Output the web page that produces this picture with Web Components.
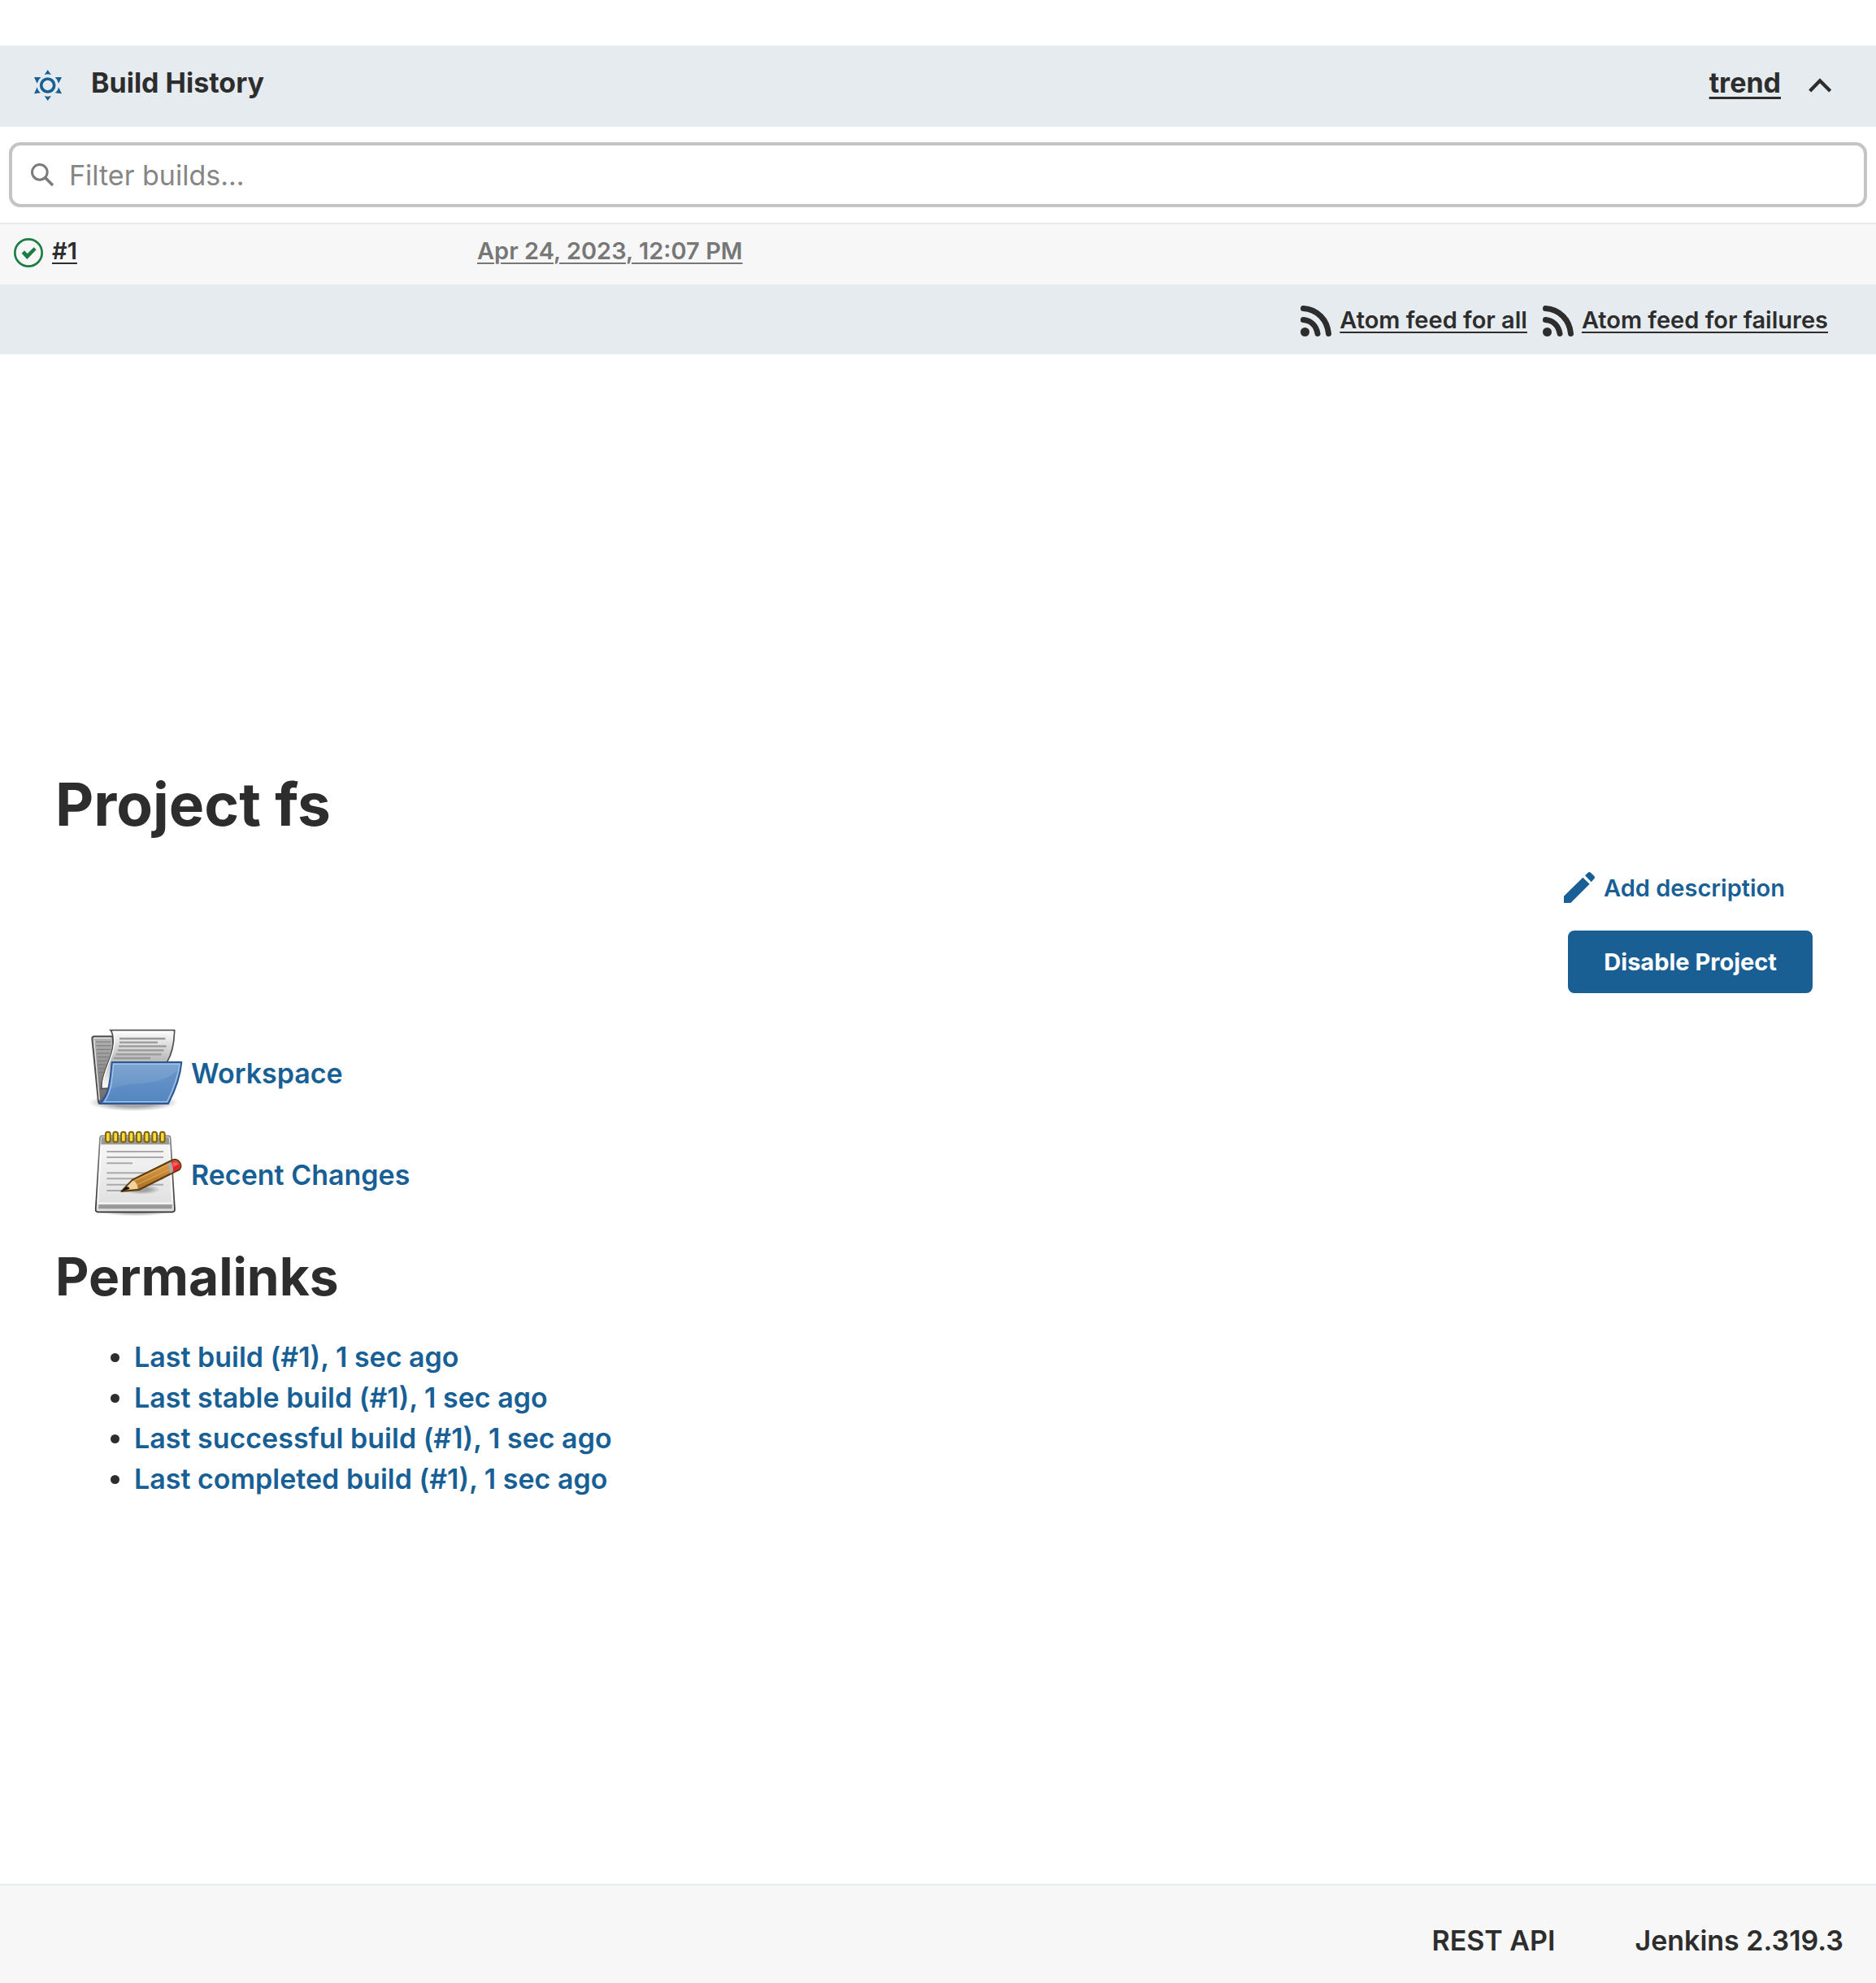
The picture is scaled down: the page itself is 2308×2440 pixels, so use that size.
<!DOCTYPE html>
<html lang="en">
<head>
<meta charset="utf-8">
<title>fs [Jenkins]</title>
<style>
  body {
    margin: 0;
    background-color: #fff;
    color: #2d2d2d;
    font-family: Inter, "Liberation Sans", sans-serif;
    font-size: 34px;
  }
</style>
</head>
<body>
<jenkins-page>
  <build-history slot="side" heading="Build History">
    <build-row number="#1" date="Apr 24, 2023, 12:07 PM"></build-row>
    <feed-link slot="feeds">Atom feed for all</feed-link>
    <feed-link slot="feeds">Atom feed for failures</feed-link>
  </build-history>
  <project-panel heading="Project fs">
    <project-link icon="folder">Workspace</project-link>
    <project-link icon="notepad">Recent Changes</project-link>
  </project-panel>
  <perma-links heading="Permalinks"></perma-links>
  <page-footer slot="footer"></page-footer>
</jenkins-page>

<script>
const icons = {
  weather: `
    <svg width="38" height="38" viewBox="120 138 114 114" fill="#185f95" aria-hidden="true">
      <circle cx="176" cy="195" r="24" fill="none" stroke="#185f95" stroke-width="11"/>
      <path d="M176 138l13 18q-13-4-25 0zM176 252l13-18q-13 4-25 0zM126 165h25q-10 9-14 23zM228 165h-25q10 9 13 23zM126 226l11-24q4 15 13 21zM228 226l-12-24q-3 15-13 21z"/>
    </svg>`,
  search: `
    <svg width="28" height="28" viewBox="112 482 84 84" fill="none" stroke="#7b7b7b" aria-hidden="true">
      <circle cx="144.500" cy="514.500" r="28" stroke-width="9"/>
      <path d="M166 536l27 27" stroke-width="11"/>
    </svg>`,
  chevron: `
    <svg width="28" height="18" viewBox="494 169 84 54" fill="none" stroke="#2d2d2d" stroke-width="13" aria-hidden="true">
      <path d="M499 217l37-38 38 38"/>
    </svg>`,
  success: `
    <svg width="36" height="36" viewBox="51 99 108 108" fill="#1b7d43" role="img" aria-label="Success">
      <circle cx="105" cy="153" r="50" fill="none" stroke="#1b7d43" stroke-width="8"/>
      <path d="M80 155l10-10 11 11 24-23 9 9-34 35z"/>
    </svg>`,
  feed: `
    <svg width="38" height="38" viewBox="0 0 38 38" fill="none" stroke="#2d2d2d" stroke-width="7" stroke-linecap="round" aria-hidden="true">
      <circle cx="5.500" cy="32.500" r="5.500" fill="#2d2d2d" stroke="none"/>
      <path d="M3.500 17.500c10 1 16 8 17.500 17M3.500 3.500c17 1 29.500 14 31 31"/>
    </svg>`,
  pencil: `
    <svg width="38" height="38" viewBox="72 69 114 114" fill="#185f95" aria-hidden="true">
      <path d="M72 158l70-69 25 24-70 70H72zM150 82l11-11q5-4 10 0l13 13q4 5 0 10l-11 12z"/>
    </svg>`,
  folder: `
    <svg width="112" height="112" viewBox="36 42 336 336" overflow="visible" aria-hidden="true">
      <defs>
        <radialGradient id="shade"><stop offset=".5" stop-color="#000" stop-opacity=".35"/><stop offset="1" stop-color="#000" stop-opacity="0"/></radialGradient>
        <linearGradient id="paper" x2="0" y2="1"><stop stop-color="#fff"/><stop offset=".5" stop-color="#bbb"/><stop offset="1" stop-color="#fff"/></linearGradient>
        <linearGradient id="blue" x2="0" y2="1"><stop stop-color="#7ea6d1"/><stop offset="1" stop-color="#5b8ac4"/></linearGradient>
        <linearGradient id="back" x2="0" y2="1"><stop stop-color="#b5b5b5"/><stop offset="1" stop-color="#666"/></linearGradient>
      </defs>
      <ellipse cx="192" cy="320" rx="166" ry="32" fill="url(#shade)"/>
      <path d="M40 84q0-8 8-8h68l20 150-66 98q-6 0-7-7z" fill="url(#back)" stroke="#505050" stroke-width="6"/>
      <path d="M46 86q0-4 4-4h60M47 90l20 220" fill="none" stroke="#e6e6e6" stroke-width="4"/>
      <path d="M54 96h55M55 110h55M56 124h52M57 138h48M59 152h43M60 166h37M61 180h32M63 194h26M64 208h21" stroke="#777" stroke-width="3"/>
      <path d="M108 53h236q-1 72-27 117L270 260l-196 9c2-72 49-119 43-184q-1-23-9-32z" fill="url(#paper)" stroke="#4d4d4d" stroke-width="5"/>
      <path d="M118 58h220M122 66c8 80-40 126-43 190" fill="none" stroke="#fff" stroke-width="4"/>
      <path d="M141 84h169M141 98h141M138 112h176M134 127h171M128 142h168M120 156h135" stroke="#999" stroke-width="7"/>
      <path d="M113 171h257q-6 71-49 153H68c34-30 37-73 45-153z" fill="url(#blue)" stroke="#2c5797" stroke-width="6" stroke-linejoin="round"/>
      <path d="M102 274c74-40 184 0 258-78q-9 56-42 119H84q12-18 18-41z" fill="#4e80bd" opacity=".4"/>
      <path d="M119 178h244q-9 63-46 139H85c24-34 28-69 34-139z" fill="none" stroke="#a5c3e4" stroke-width="4"/>
    </svg>`,
  notepad: `
    <svg width="112" height="112" viewBox="36 42 336 336" overflow="visible" aria-hidden="true">
      <defs>
        <radialGradient id="shade"><stop offset=".4" stop-color="#000" stop-opacity=".3"/><stop offset="1" stop-color="#000" stop-opacity="0"/></radialGradient>
        <linearGradient id="page" x2="0" y2="1"><stop stop-color="#f9f9f9"/><stop offset="1" stop-color="#dedede"/></linearGradient>
        <linearGradient id="edge" x2="0" y2="1"><stop stop-color="#888"/><stop offset="1" stop-color="#333"/></linearGradient>
        <linearGradient id="wood" x2=".4" y2="1"><stop stop-color="#e5b565"/><stop offset=".5" stop-color="#d0923e"/><stop offset="1" stop-color="#a0661f"/></linearGradient>
      </defs>
      <ellipse cx="200" cy="348" rx="135" ry="16" fill="url(#shade)"/>
      <path d="M77 68h244q7 0 8 8l16 264q0 9-9 9H61q-8 0-8-9L69 76q1-8 8-8z" fill="url(#page)" stroke="url(#edge)" stroke-width="5"/>
      <path d="M74 73h249l3 27H73z" fill="#999"/>
      <path d="M65 322h270v15H63z" fill="#999"/>
      <path d="M60 316h277M74 102L61 312M324 102l12 210" stroke="#fff" stroke-width="4" fill="none"/>
      <path d="M94 126h209M94 147h209M94 169h95M94 205h209M94 226h209M94 248h209M94 270h90" stroke="#aaa" stroke-width="6"/>
      <g fill="#f5da42" stroke="#80640c" stroke-width="6">
        <rect x="90" y="53" width="17" height="38" rx="8"/><rect x="118" y="53" width="17" height="38" rx="8"/>
        <rect x="147" y="53" width="17" height="38" rx="8"/><rect x="176" y="53" width="17" height="38" rx="8"/>
        <rect x="204" y="53" width="17" height="38" rx="8"/><rect x="233" y="53" width="17" height="38" rx="8"/>
        <rect x="262" y="53" width="17" height="38" rx="8"/><rect x="291" y="53" width="17" height="38" rx="8"/>
      </g>
      <ellipse cx="222" cy="266" rx="70" ry="18" fill="url(#shade)"/>
      <path d="M148 273l41-43 144-71c24-13 45 18 29 33L213 267z" fill="url(#wood)" stroke="#5c3b10" stroke-width="6" stroke-linejoin="round"/>
      <path d="M156 268l34-35c9 0 20 16 18 30z" fill="#efd49d"/>
      <path d="M149 272l16-16q11-1 14 7z" fill="#111"/>
      <path d="M192 236l132-64M204 249l128-60" stroke="#e0ac5c" stroke-width="3"/>
      <path d="M318 171l13-7q11 12 8 37l-13 6q4-17-8-36z" fill="#aaa"/>
      <path d="M331 164c21-13 43 10 29 25q-7 7-22 12 3-20-7-37z" fill="#e8202c"/>
      <path d="M335 168q17-9 25 4l-18 10z" fill="#ff5a5a"/>
    </svg>`
};

class JenkinsPage extends HTMLElement {
  constructor() {
    super();
    this.attachShadow({mode: 'open'}).innerHTML = `
      <style>
        :host {
          display: flex;
          flex-direction: column;
          min-height: 100vh;
          box-sizing: border-box;
          padding-top: 56px;
        }

        main {
          flex: 1;
          margin-top: 500px;
          padding: 0 68px;
        }
      </style>
      <slot name="side"></slot>
      <main><slot></slot></main>
      <slot name="footer"></slot>
    `;
  }
}

class BuildHistory extends HTMLElement {
  connectedCallback() {
    this.attachShadow({mode: 'open'}).innerHTML = `
      <style>
        :host {
          display: block;
        }

        header {
          display: flex;
          align-items: center;
          height: 98px;
          padding: 0 55px 2px 40px;
          background-color: #e6ebef;
        }

        h2 {
          flex: 1;
          margin: 0 0 0 34px;
          padding-bottom: 8px;
          font-size: 34px;
          font-weight: 700;
        }

        header > a {
          padding-bottom: 8px;
          color: inherit;
          font-weight: 700;
          text-decoration-thickness: 3px;
          text-underline-offset: 5px;
        }

        button {
          display: flex;
          margin-left: 34px;
          padding: 0;
          border: 0;
          background: none;
        }

        label {
          display: flex;
          align-items: center;
          height: 72px;
          margin: 19px 11px;
          padding-left: 23px;
          border: 4px solid #c4c4c4;
          border-radius: 14px;
        }

        input {
          flex: 1;
          margin-left: 19px;
          padding: 0;
          border: 0;
          outline: 0;
          background: none;
          color: inherit;
          font: inherit;
        }

        input::placeholder {
          color: #868686;
        }

        footer {
          display: flex;
          align-items: center;
          justify-content: flex-end;
          gap: 19px;
          height: 86px;
          padding-right: 59px;
          background-color: #e6ebef;
        }
      </style>
      <header>
        ${icons.weather}
        <h2>${this.getAttribute('heading')}</h2>
        <a href="#trend">trend</a>
        <button type="button" aria-label="Collapse">${icons.chevron}</button>
      </header>
      <label>
        ${icons.search}
        <input type="text" placeholder="Filter builds..." aria-label="Filter builds">
      </label>
      <slot></slot>
      <footer><slot name="feeds"></slot></footer>
    `;
  }
}

class BuildRow extends HTMLElement {
  connectedCallback() {
    this.attachShadow({mode: 'open'}).innerHTML = `
      <style>
        :host {
          display: block;
          border-top: 2px solid #e6ebef;
          background-color: #f7f7f7;
          font-size: 29px;
          font-weight: 600;
        }

        table {
          width: 100%;
          height: 74px;
          border-collapse: collapse;
          table-layout: fixed;
        }

        td {
          padding: 0 0 4px;
        }

        td:first-child {
          width: 570px;
          padding-left: 17px;
        }

        div {
          display: flex;
          align-items: center;
          gap: 11px;
        }

        a {
          padding-bottom: 6px;
          color: inherit;
          text-decoration-thickness: 2px;
          text-underline-offset: 4px;
        }

        .date {
          color: #777;
        }
      </style>
      <table>
        <tr>
          <td><div>${icons.success}<a href="#build">${this.getAttribute('number')}</a></div></td>
          <td><div><a class="date" href="#build">${this.getAttribute('date')}</a></div></td>
        </tr>
      </table>
    `;
  }
}

class FeedLink extends HTMLElement {
  constructor() {
    super();
    this.attachShadow({mode: 'open'}).innerHTML = `
      <style>
        :host {
          display: flex;
          align-items: center;
          gap: 10px;
          font-size: 29px;
          font-weight: 600;
        }

        svg {
          margin-top: 4px;
        }

        a {
          color: inherit;
          text-decoration-thickness: 2px;
          text-underline-offset: 4px;
        }
      </style>
      ${icons.feed}
      <a href="#feed"><slot></slot></a>
    `;
  }
}

class ProjectPanel extends HTMLElement {
  connectedCallback() {
    this.attachShadow({mode: 'open'}).innerHTML = `
      <style>
        :host {
          display: block;
        }

        h1 {
          margin: 0;
          font-size: 73px;
          line-height: 108px;
          font-weight: 700;
        }

        .actions {
          display: flex;
          flex-direction: column;
          align-items: flex-end;
          gap: 34px;
          padding: 29px 10px 0 0;
          font-size: 29px;
        }

        .actions a {
          display: flex;
          align-items: center;
          gap: 11px;
          margin-right: 34px;
          color: #185f95;
          font-weight: 600;
          text-decoration: none;
        }

        button {
          height: 77px;
          padding: 0 44px;
          border: 0;
          border-radius: 8px;
          background-color: #1a5f94;
          color: #fff;
          font: inherit;
          font-weight: 700;
        }

        nav {
          display: flex;
          flex-direction: column;
          gap: 13px;
          padding: 42px 0 0 44px;
        }
      </style>
      <h1>${this.getAttribute('heading')}</h1>
      <div class="actions">
        <a href="#description">${icons.pencil}Add description</a>
        <button type="button">Disable Project</button>
      </div>
      <nav><slot></slot></nav>
    `;
  }
}

class ProjectLink extends HTMLElement {
  connectedCallback() {
    this.attachShadow({mode: 'open'}).innerHTML = `
      <style>
        :host {
          display: flex;
        }

        a {
          display: flex;
          align-items: center;
          gap: 11px;
          color: #185f95;
          font-weight: 600;
          text-decoration: none;
        }
      </style>
      <a href="#">${icons[this.getAttribute('icon')]}<slot></slot></a>
    `;
  }
}

class PermaLinks extends HTMLElement {
  connectedCallback() {
    const builds = ['Last build', 'Last stable build', 'Last successful build', 'Last completed build'];
    this.attachShadow({mode: 'open'}).innerHTML = `
      <style>
        :host {
          display: block;
        }

        h2 {
          margin: 30px 0 34px;
          font-size: 64px;
          line-height: 80px;
          font-weight: 700;
        }

        ul {
          margin: 0;
          padding-left: 97px;
          line-height: 50px;
        }

        a {
          color: #185f95;
          font-weight: 600;
          text-decoration: none;
        }
      </style>
      <h2>${this.getAttribute('heading')}</h2>
      <ul>
        ${builds.map(build => `<li><a href="#build">${build} (#1), 1 sec ago</a></li>`).join('')}
      </ul>
    `;
  }
}

class PageFooter extends HTMLElement {
  constructor() {
    super();
    this.attachShadow({mode: 'open'}).innerHTML = `
      <style>
        :host {
          display: flex;
          align-items: center;
          justify-content: flex-end;
          gap: 98px;
          box-sizing: border-box;
          height: 122px;
          padding: 14px 40px 0;
          border-top: 2px solid #e6ebef;
          background-color: #f7f7f7;
          font-weight: 600;
        }

        a {
          color: inherit;
          text-decoration: none;
        }
      </style>
      <a href="#api">REST API</a>
      <a href="#jenkins">Jenkins 2.319.3</a>
    `;
  }
}

customElements.define('jenkins-page', JenkinsPage);
customElements.define('build-history', BuildHistory);
customElements.define('build-row', BuildRow);
customElements.define('feed-link', FeedLink);
customElements.define('project-panel', ProjectPanel);
customElements.define('project-link', ProjectLink);
customElements.define('perma-links', PermaLinks);
customElements.define('page-footer', PageFooter);
</script>
</body>
</html>
